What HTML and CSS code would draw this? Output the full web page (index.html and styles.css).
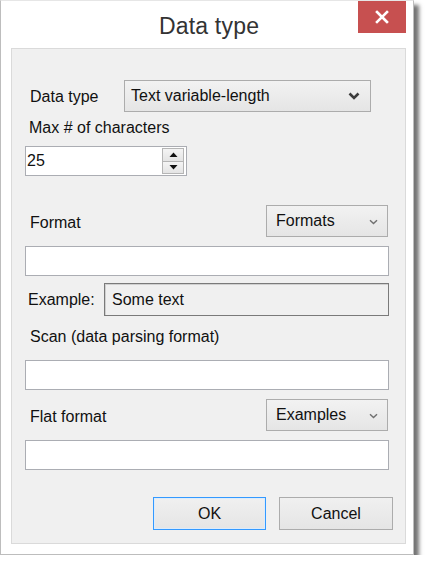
FILE: index.html
```html
<!DOCTYPE html>
<html>
<head>
<meta charset="utf-8">
<link rel="stylesheet" href="styles.css">
</head>
<body>
<div class="window">
  <div class="titlebar">
    <div class="title">Data type</div>
    <div class="close">
      <svg width="14" height="14" viewBox="0 0 14 14"><path d="M2 2 L12 12 M12 2 L2 12" stroke="#fff" stroke-width="2.6" stroke-linecap="square"/></svg>
    </div>
  </div>
  <div class="panel">
    <div class="row row-type">
      <div class="lbl lbl-type">Data type</div>
      <div class="select select-type">
        <span>Text variable-length</span>
        <svg class="chev" width="12" height="8" viewBox="0 0 12 8"><path d="M1.5 1.5 L6 6 L10.5 1.5" fill="none" stroke="#3c3c3c" stroke-width="2.6"/></svg>
      </div>
    </div>
    <div class="lbl lbl-max">Max # of characters</div>
    <div class="spin">
      <span class="spin-val">25</span>
      <div class="spin-btns">
        <div class="sbtn"><svg width="9" height="5" viewBox="0 0 9 5"><path d="M0.5 5 L4.5 0.5 L8.5 5 Z" fill="#111"/></svg></div>
        <div class="sbtn"><svg width="9" height="5" viewBox="0 0 9 5"><path d="M0.5 0 L4.5 4.5 L8.5 0 Z" fill="#111"/></svg></div>
      </div>
    </div>
    <div class="row row-format">
      <div class="lbl lbl-side">Format</div>
      <div class="select select-small">
        <span>Formats</span>
        <svg class="chev-s" width="9" height="6" viewBox="0 0 9 6"><path d="M1 1.2 L4.5 4.6 L8 1.2" fill="none" stroke="#707070" stroke-width="1.4"/></svg>
      </div>
    </div>
    <div class="input in-format"></div>
    <div class="row row-example">
      <div class="lbl lbl-example">Example:</div>
      <div class="example-box">Some text</div>
    </div>
    <div class="lbl lbl-scan">Scan (data parsing format)</div>
    <div class="input in-scan"></div>
    <div class="row row-flat">
      <div class="lbl lbl-side">Flat format</div>
      <div class="select select-small">
        <span>Examples</span>
        <svg class="chev-s" width="9" height="6" viewBox="0 0 9 6"><path d="M1 1.2 L4.5 4.6 L8 1.2" fill="none" stroke="#707070" stroke-width="1.4"/></svg>
      </div>
    </div>
    <div class="input in-flat"></div>
    <div class="buttons">
      <div class="btn btn-ok">OK</div>
      <div class="btn">Cancel</div>
    </div>
  </div>
</div>
</body>
</html>
```
FILE: styles.css
```css
html, body {
  margin: 0;
  padding: 0;
  background: #ffffff;
}
body {
  font-family: "Liberation Sans", Arial, sans-serif;
  font-size: 16px;
  color: #111111;
}
.window {
  box-sizing: border-box;
  width: 414px;
  height: 555px;
  background: #ffffff;
  border: 1px solid #bdbdbd;
  border-top-color: #e6e6e6;
  padding: 0 7px 10px 10px;
  box-shadow: 5px 5px 4px rgba(0, 0, 0, 0.55);
}
.titlebar {
  display: grid;
  grid-template-columns: 1fr auto 1fr;
  height: 47px;
  margin: 0 -7px 0 -10px;
}
.title {
  grid-column: 2;
  font-size: 23px;
  color: #333333;
  line-height: 44px;
  padding-top: 3px;
  padding-left: 4px;
  letter-spacing: 0.2px;
}
.close {
  grid-column: 3;
  justify-self: end;
  align-self: start;
  margin-right: 7px;
  width: 48px;
  height: 32px;
  background: #c75050;
  display: flex;
  align-items: center;
  justify-content: center;
}
.panel {
  box-sizing: border-box;
  height: 496px;
  background: #f0f0f0;
  border: 1px solid #dadada;
  padding: 31px 12px 0 13px;
}
.row {
  display: flex;
  align-items: center;
}
.lbl {
  white-space: nowrap;
}
.row-type {
  height: 32px;
}
.lbl-type {
  width: 94px;
  padding-left: 5px;
  padding-top: 2px;
}
.select {
  box-sizing: border-box;
  display: flex;
  align-items: center;
  justify-content: space-between;
  border: 1px solid #acacac;
  background: linear-gradient(#f2f2f2, #e5e5e5);
}
.select-type {
  width: 247px;
  height: 32px;
  padding: 0 10px 0 6px;
}
.lbl-max {
  margin-top: 5px;
  height: 21px;
  line-height: 22px;
  padding-left: 4px;
}
.spin {
  box-sizing: border-box;
  margin-top: 8px;
  width: 162px;
  height: 30px;
  background: #ffffff;
  border: 1px solid #abadb3;
  display: flex;
  align-items: center;
  justify-content: space-between;
  padding: 1px 2px 1px 1px;
}
.spin-btns {
  display: flex;
  flex-direction: column;
  width: 22px;
  height: 100%;
}
.sbtn {
  box-sizing: border-box;
  flex: 1;
  border: 1px solid #b5b5b5;
  background: linear-gradient(#f4f4f4, #e4e4e4);
  display: flex;
  align-items: center;
  justify-content: center;
}
.sbtn + .sbtn {
  border-top: none;
}
.row-format {
  margin-top: 29px;
  height: 32px;
  justify-content: space-between;
  margin-right: 5px;
}
.lbl-side {
  padding-left: 5px;
  padding-top: 3px;
}
.select-small {
  width: 122px;
  height: 32px;
  padding: 0 9px 0 9px;
}
.chev-s {
  margin-top: 1px;
}
.input {
  box-sizing: border-box;
  height: 30px;
  margin-right: 4px;
  background: #ffffff;
  border: 1px solid #abadb3;
}
.in-format {
  margin-top: 9px;
}
.row-example {
  margin-top: 7px;
  height: 33px;
  margin-right: 4px;
}
.lbl-example {
  width: 76px;
  padding-left: 3px;
}
.example-box {
  box-sizing: border-box;
  flex: 1;
  height: 33px;
  border: 1px solid #7a7a7a;
  box-shadow: inset 1px 1px 0 #d0d0d0;
  background: #f0f0f0;
  display: flex;
  align-items: center;
  padding-left: 7px;
}
.lbl-scan {
  margin-top: 10px;
  height: 22px;
  line-height: 22px;
  padding-left: 5px;
}
.in-scan {
  margin-top: 12px;
}
.row-flat {
  margin-top: 9px;
  height: 32px;
  justify-content: space-between;
  margin-right: 5px;
}
.in-flat {
  margin-top: 9px;
}
.buttons {
  margin-top: 27px;
  display: flex;
  justify-content: flex-end;
  gap: 13px;
}
.btn {
  box-sizing: border-box;
  width: 114px;
  height: 33px;
  border: 1px solid #acacac;
  background: linear-gradient(#f0f0f0, #e5e5e5);
  display: flex;
  align-items: center;
  justify-content: center;
}
.btn-ok {
  width: 113px;
  border: 1px solid #3399ff;
  box-shadow: inset 0 0 0 1px #dcecfc;
}
```
